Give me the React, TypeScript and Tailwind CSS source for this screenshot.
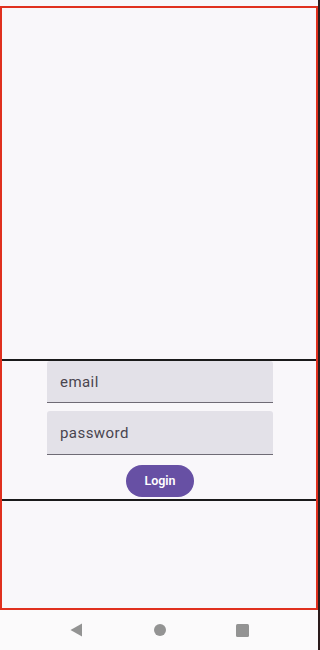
import React, { useState } from 'react';

const App: React.FC = () => {
    const [email, setEmail] = useState('');
    const [password, setPassword] = useState('');

    const fieldClass = "w-full h-full bg-transparent px-[13px] pt-[1px] text-[15px] tracking-[0.45px] text-[#49454f] placeholder:text-[#49454f] outline-none";

    return (
        <div className="w-[320px] h-[650px] flex bg-[#f9f7fa] font-['Roboto',sans-serif] overflow-hidden">
            <div className="w-[318px] h-full flex flex-col">
                <div className="h-[6px] bg-[#f9f7fa]"></div>
                <div className="h-[604px] border-2 border-[#e0301e] flex flex-col bg-[#f9f7fa]">
                    <div className="h-[351px]"></div>
                    <div className="h-[2px] bg-[#1a1a1a]"></div>
                    <div className="h-[138px] flex flex-col items-center">
                        <div className="w-[226px] h-[42px] ml-[2px] bg-[#e3e1e8] border-b border-[#6f6b75] rounded-t-[3px]">
                            <input value={email} onChange={e => setEmail(e.target.value)} placeholder="email" className={fieldClass} />
                        </div>
                        <div className="w-[226px] h-[44px] ml-[2px] mt-[8px] bg-[#e3e1e8] border-b border-[#6f6b75] rounded-t-[3px]">
                            <input type="password" value={password} onChange={e => setPassword(e.target.value)} placeholder="password" className={fieldClass} />
                        </div>
                        <button className="mt-[10px] ml-[2px] w-[68px] h-[32px] rounded-full bg-[#6750a4] text-white text-[12.5px] font-semibold">Login</button>
                    </div>
                    <div className="h-[2px] bg-[#1a1a1a]"></div>
                    <div className="flex-1"></div>
                </div>
                <div className="h-[40px] bg-[#fbfafb] flex items-center justify-between pl-[69px] pr-[69px]">
                    <svg width="14" height="14" viewBox="0 0 14 14"><path d="M13 0.5 L13 13.5 L1.5 7 Z" fill="#939393" /></svg>
                    <svg width="12" height="12" viewBox="0 0 12 12"><circle cx="6" cy="6" r="6" fill="#939393" /></svg>
                    <svg width="13" height="13" viewBox="0 0 13 13"><rect x="0" y="0" width="13" height="13" rx="1.5" fill="#939393" /></svg>
                </div>
            </div>
            <div className="w-[2px] h-full bg-[#2a1b1b]"></div>
        </div>
    );
};

export default App;
